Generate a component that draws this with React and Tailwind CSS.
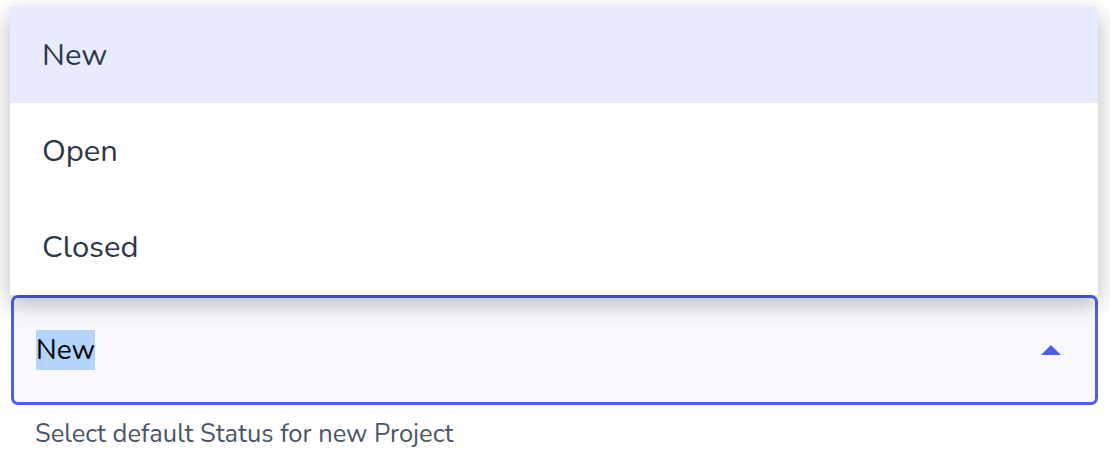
const options = ["New", "Open", "Closed"];

const StatusSelect = () => {
    const selected = "New";

    return (
        <div className="w-[1110px] h-[458px] bg-white px-[10px] pt-[7px] font-['Nunito','Lato','Noto_Sans',sans-serif]">
            <ul className="relative z-10 w-[1088px] bg-white shadow-[0_8px_22px_rgba(0,0,0,0.28)]">
                {options.map((opt) => (
                    <li
                        key={opt}
                        className={`h-[96px] flex items-center px-[32px] text-[31px] text-[#2d3748] ${opt === selected ? "bg-[#e8ebfe]" : "bg-white"}`}
                    >
                        {opt}
                    </li>
                ))}
            </ul>
            <div className="ml-px w-[1087px] h-[110px] flex items-center justify-between pl-[22px] pr-[34px] bg-[#f8f9fe] border-[3px] border-[#4e5ef5] rounded-[7px]">
                <span className="text-[28px] text-black bg-[#b3d4fc] leading-[40px]">{selected}</span>
                <svg width="20" height="10" viewBox="0 0 20 10">
                    <path d="M0 10 L10 0 L20 10 Z" fill="#4e5ef5" />
                </svg>
            </div>
            <p className="ml-[25px] mt-[12px] text-[25.5px] leading-[34px] text-[#4a5568]">
                Select default Status for new Project
            </p>
        </div>
    );
};

export default StatusSelect;
